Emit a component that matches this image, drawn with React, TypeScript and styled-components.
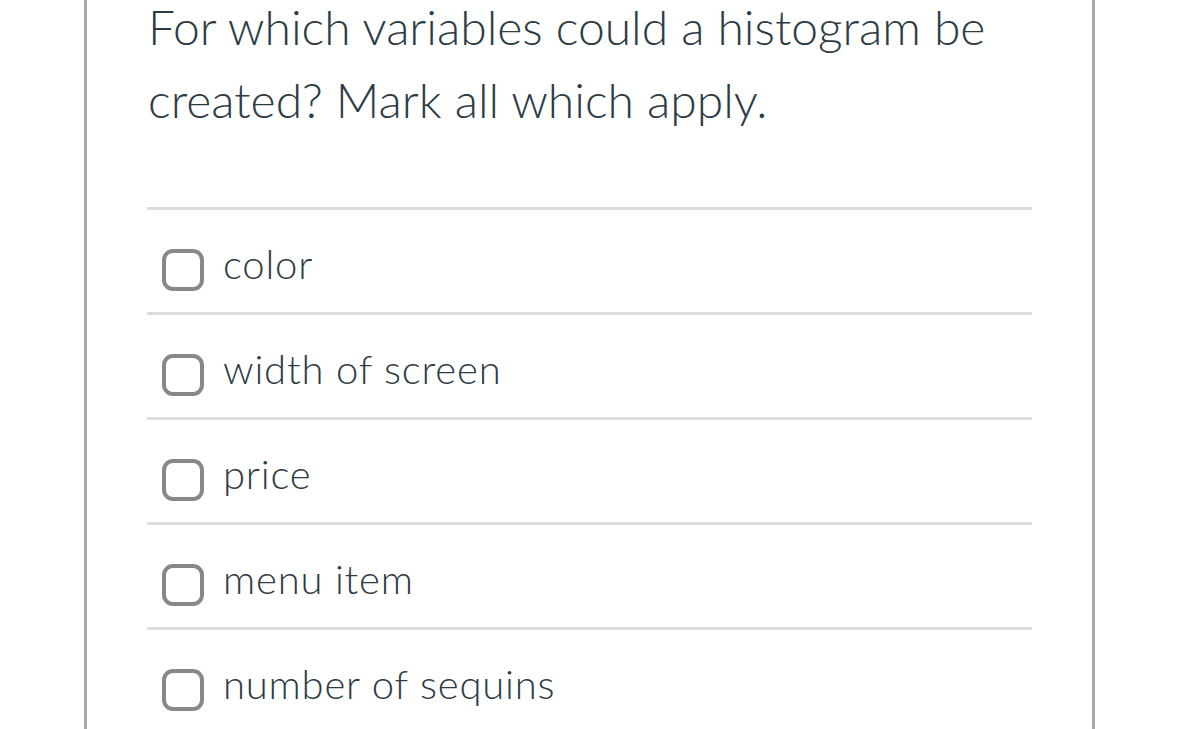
import styled, { createGlobalStyle } from "styled-components";

const GlobalStyle = createGlobalStyle`
  html, body {
    margin: 0;
    padding: 0;
    background: #ffffff;
    overflow: hidden;
  }
  body {
    font-family: "Lato Light", Lato, "Open Sans", sans-serif;
    color: #2d3b45;
  }
`;

const Page = styled.div`
  height: 729px;
  overflow: hidden;
  padding-left: 84px;
  width: 1179px;
  box-sizing: border-box;
`;

const Card = styled.div`
  width: 1011px;
  min-height: 760px;
  box-sizing: border-box;
  border-left: 3px solid #aaaaaa;
  border-right: 3px solid #aaaaaa;
  padding: 0 60px;
  margin-top: -10px;
`;

const Question = styled.p`
  margin: 0;
  font-size: 48px;
  font-weight: 300;
  line-height: 73px;
  padding-left: 1px;
  padding-bottom: 71px;
`;

const Answers = styled.div`
  display: flex;
  flex-direction: column;
`;

const Row = styled.label`
  display: flex;
  align-items: flex-start;
  gap: 19px;
  height: 102px;
  box-sizing: content-box;
  border-top: 3px solid #dddddd;
  padding-left: 15px;
  cursor: pointer;
`;

const Box = styled.span`
  margin-top: 39px;
  width: 42px;
  height: 42px;
  box-sizing: border-box;
  border: 4px solid #888888;
  border-radius: 11px;
  flex: none;
`;

const Text = styled.span`
  margin-top: 39px;
  font-size: 40px;
  font-weight: 300;
  line-height: 30px;
  letter-spacing: 0.8px;
`;

const options = ["color", "width of screen", "price", "menu item", "number of sequins"];

export default function App() {
  return (
    <>
      <GlobalStyle />
      <Page>
        <Card>
          <Question>
            For which variables could a histogram be created? Mark all which apply.
          </Question>
          <Answers>
            {options.map((o) => (
              <Row key={o}>
                <Box />
                <Text>{o}</Text>
              </Row>
            ))}
          </Answers>
        </Card>
      </Page>
    </>
  );
}
